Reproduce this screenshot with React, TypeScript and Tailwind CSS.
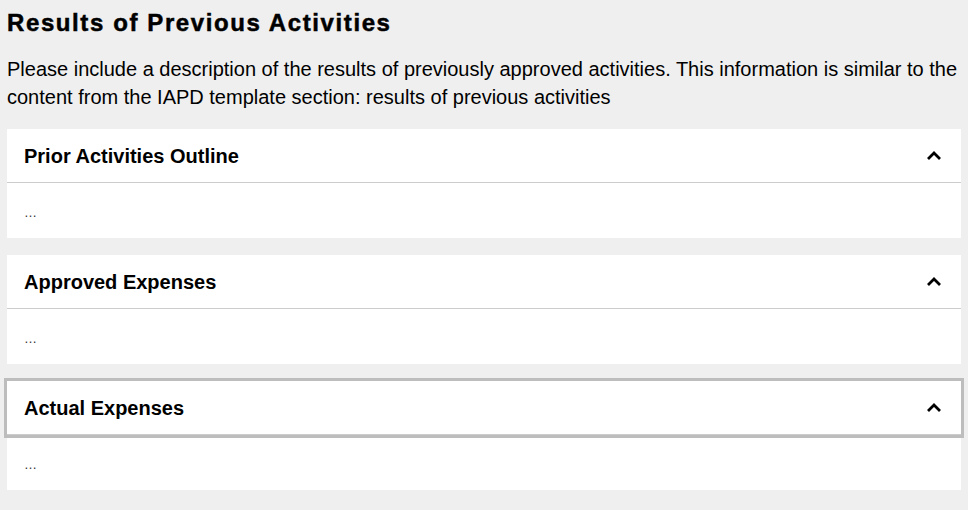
const sections = [
  { title: 'Prior Activities Outline', focused: false },
  { title: 'Approved Expenses', focused: false },
  { title: 'Actual Expenses', focused: true },
];

function ChevronUp() {
  return (
    <svg width="16" height="11" viewBox="0 0 16 11" className="text-black">
      <path d="M2 9 L8 3 L14 9" fill="none" stroke="currentColor" strokeWidth="2.8" />
    </svg>
  );
}

export default function App() {
  return (
    <div className="min-h-[510px] bg-[#efefef] px-[7px] pt-[9px] pb-4 font-['Liberation_Sans',Arial,sans-serif] text-black">
      <h2 className="text-[24px] leading-[28px] font-bold tracking-[1.6px] [-webkit-text-stroke:0.5px_black]">
        Results of Previous Activities
      </h2>
      <p className="mt-[18px] text-[20px] leading-[28px]">
        Please include a description of the results of previously approved activities. This information is similar to the
        content from the IAPD template section: results of previous activities
      </p>
      <div className="mt-[18px] flex flex-col gap-[17px]">
        {sections.map((s) => (
          <div key={s.title} className="bg-white">
            <button
              className={
                'flex h-[54px] w-full items-center justify-between border-b border-[#cccccc] pl-[17px] pr-[19px] text-left ' +
                (s.focused ? 'outline-[3px] outline-solid outline-[#bdbdbd]' : 'outline-none')
              }
            >
              <span className="text-[20px] font-bold">{s.title}</span>
              <ChevronUp />
            </button>
            <div className="h-[55px] pl-[17px] pt-[23px] text-[13px] leading-none text-[#333333]">…</div>
          </div>
        ))}
      </div>
    </div>
  );
}
